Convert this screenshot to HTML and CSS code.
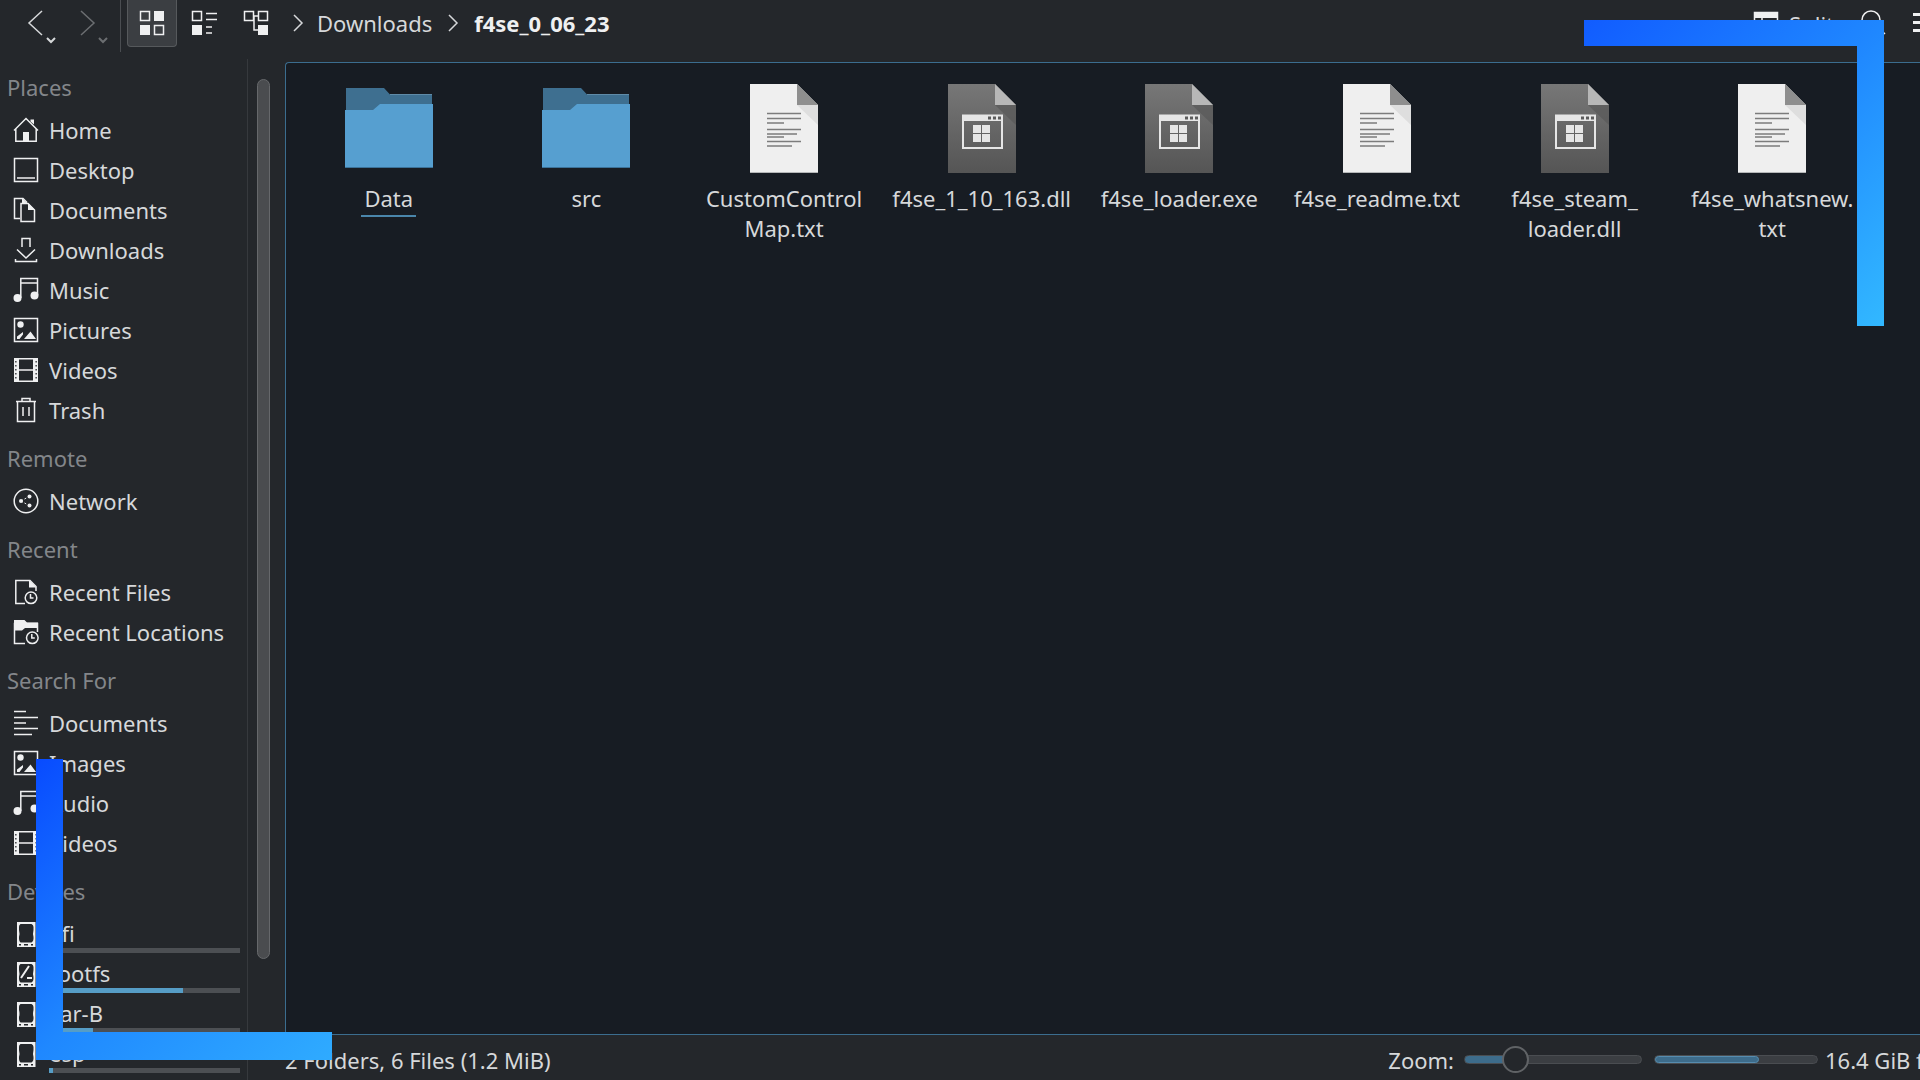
FILE: index.html
```html
<!DOCTYPE html>
<html lang="en">
<head>
    <meta charset="UTF-8">
    <meta name="viewport" content="width=device-width, initial-scale=1.0">
    <title>f4se_0_06_23 - Dolphin</title>
    <link rel="stylesheet" href="styles.css">
</head>
<body>

    <!-- Shared icons -->
    <svg class="sprite" aria-hidden="true">
        <linearGradient id="dark-page" x1="0" y1="0" x2="0" y2="1">
            <stop offset="0" stop-color="#777"/>
            <stop offset="1" stop-color="#555"/>
        </linearGradient>
        <symbol id="folder" viewBox="0 0 96 96">
            <path fill="#3e6f90" d="M5 8h38l6 6.500h42V50H5z"/>
            <path fill="#5f8ba8" d="M49 14h42v1H49z"/>
            <path fill="#569fd0" d="M4 30h28l7-6h53v64H4z"/>
            <path fill="#3b7299" d="M4 87h88v1H4z"/>
        </symbol>
        <symbol id="text-file" viewBox="0 0 96 96">
            <path fill="#efefef" d="M14 4h47l21 21v68H14z"/>
            <path fill="#dedede" d="M61 25h21v20z"/>
            <path fill="#8e8e8e" d="M61 4l21 21H61z"/>
            <path fill="#b5b7b8" d="M14 92h68v1H14z"/>
            <path stroke="#7c7c7c" stroke-width="1.600" d="M31 33.500h34M31 38.500h34M31 43h17M31 49.500h34M31 54h30M31 57h17M31 61.500h34M31 66h25"/>
        </symbol>
        <symbol id="exe-file" viewBox="0 0 96 96">
            <path fill="url(#dark-page)" d="M14 4h47l21 21v68H14z"/>
            <path fill="#555" d="M61 25h21v20z" opacity=".6"/>
            <path fill="#b7b7b7" d="M61 4l21 21H61z"/>
            <path fill="#e6e6e6" fill-rule="evenodd" d="M28 34.500h41V69H28zM30 41v26h37V41z"/>
            <path fill="#5c5c5c" d="M54 36.500h3v3h-3zM59 36.500h3v3h-3zM64 36.500h3v3h-3z"/>
            <path fill="#e6e6e6" d="M39 45h8v8h-8zM48 45h8v8h-8zM39 54h8v8h-8zM48 54h8v8h-8z"/>
        </symbol>
        <symbol id="home" viewBox="0 0 26 26">
            <path fill="none" stroke="currentColor" stroke-width="1.500" d="M1 13.500L13 1.500l12 12M2.800 12v12.300h20.400V12"/>
            <path fill="currentColor" d="M10 15h6v9h-6zM17.500 2.500h3.500v5l-3.500-3z"/>
        </symbol>
        <symbol id="desktop" viewBox="0 0 26 26">
            <path fill="none" stroke="currentColor" stroke-width="1.500" d="M1.500 1.500h23v23h-23zM4 21h18"/>
        </symbol>
        <symbol id="documents" viewBox="0 0 26 26">
            <path fill="none" stroke="currentColor" stroke-width="1.500" d="M7 21.500H1.500v-20H10l4 4M8 6.500h7l6.500 6.500v11.500H8z"/>
            <path fill="currentColor" d="M9 1l5 5.500H9zM15 6l7 7h-7z"/>
        </symbol>
        <symbol id="downloads" viewBox="0 0 26 26">
            <path fill="none" stroke="currentColor" stroke-width="1.500" d="M9 10V1.500h8V10M4 12.500l9 8.500 9-8.500M2.500 22v2.500h21V22"/>
        </symbol>
        <symbol id="music" viewBox="0 0 26 26">
            <path fill="none" stroke="currentColor" stroke-width="1.500" d="M7.800 21V1.500h16.700V18M8 6h16"/>
            <circle cx="4.500" cy="21" r="4" fill="currentColor"/>
            <circle cx="21.500" cy="18.500" r="4" fill="currentColor"/>
        </symbol>
        <symbol id="pictures" viewBox="0 0 26 26">
            <path fill="none" stroke="currentColor" stroke-width="1.500" d="M1.500 1.500h23v23h-23z"/>
            <circle cx="7.500" cy="7.500" r="3.200" fill="currentColor"/>
            <path fill="currentColor" d="M4 22v-2.500l6-4.500v2.500L6.500 22zM11 22l6.500-7.500L23 22z"/>
        </symbol>
        <symbol id="videos" viewBox="0 0 26 26">
            <path fill="none" stroke="currentColor" stroke-width="1.500" d="M1 1.800h24M1 24.200h24M5.500 13h15"/>
            <path fill="currentColor" fill-rule="evenodd" d="M1 1h5v24H1zM2.200 4v1.500h1.300V4zM2.200 8v1.500h1.300V8zM2.200 12v1.500h1.300V12zM2.200 16v1.500h1.300V16zM2.200 20v1.500h1.300V20zM20 1h5v24h-5zM22.500 4v1.500h1.300V4zM22.500 8v1.500h1.300V8zM22.500 12v1.500h1.300V12zM22.500 16v1.500h1.300V16zM22.500 20v1.500h1.300V20z"/>
        </symbol>
        <symbol id="trash" viewBox="0 0 26 26">
            <path fill="none" stroke="currentColor" stroke-width="1.500" d="M3 4.500h20M9 4V1.500h8V4M4.500 4.500v20h17v-20M10 10v9M16 10v9"/>
        </symbol>
        <symbol id="network" viewBox="0 0 26 26">
            <circle cx="13" cy="13" r="11.800" fill="none" stroke="currentColor" stroke-width="1.500"/>
            <path fill="none" stroke="currentColor" stroke-dasharray="2 2" d="M8 13l8-4.500M8 13l8 4.500"/>
            <circle cx="8" cy="13" r="2" fill="currentColor"/>
            <circle cx="16.500" cy="8.500" r="2" fill="currentColor"/>
            <circle cx="16.500" cy="17.500" r="2" fill="currentColor"/>
        </symbol>
        <symbol id="recent-files" viewBox="0 0 26 26">
            <path fill="none" stroke="currentColor" stroke-width="1.500" d="M12 24.500H2.800v-23H17l6 6V12"/>
            <path fill="currentColor" d="M16 1l7.500 7.500H16z"/>
            <path fill="none" stroke="currentColor" stroke-width="1.500" d="M17.500 15v4h3"/>
            <circle cx="18" cy="18.800" r="5.800" fill="none" stroke="currentColor" stroke-width="1.500"/>
        </symbol>
        <symbol id="recent-places" viewBox="0 0 26 26">
            <path fill="none" stroke="currentColor" stroke-width="1.500" d="M12 24.500H1.500v-20h23V13"/>
            <path fill="currentColor" d="M1 1h10.500l2.500 2.500h11V9H12l-3 2.500H1z"/>
            <path fill="none" stroke="currentColor" stroke-width="1.500" d="M18.800 15v4h3"/>
            <circle cx="19.300" cy="18.800" r="5.800" fill="none" stroke="currentColor" stroke-width="1.500"/>
        </symbol>
        <symbol id="lines" viewBox="0 0 26 26">
            <path stroke="currentColor" stroke-width="1.500" d="M1 1.500h12M1 7.500h24M1 13h12M1 18.500h24M1 24.500h18"/>
        </symbol>
        <symbol id="disk" viewBox="0 0 26 26">
            <path fill="currentColor" fill-rule="evenodd" d="M4 1h18.500v25H4zM7.500 3Q6 4 6 6v3q1 4 0 7v2q0 2 1.500 3.500h11Q20.500 20 20.500 18v-2q-1-3 0-7V6q0-2-2-3zM6 23v1.500h2V23zM11 23v1.500h4V23zM18 23v1.500h2V23z"/>
        </symbol>
        <symbol id="root-disk" viewBox="0 0 26 26">
            <use href="#disk"/>
            <path fill="none" stroke="currentColor" stroke-width="2" d="M16 5L8 17M14 17h5"/>
        </symbol>
    </svg>

    <div class="window">
        <header class="toolbar">
            <button class="nav" aria-label="Back">
                <svg width="32" height="46" viewBox="0 0 32 46"><path d="M18 11L5 23l13 12"/><path class="caret" d="M23 38l4 4 4-4"/></svg>
            </button>
            <button class="nav disabled" aria-label="Forward">
                <svg width="32" height="46" viewBox="0 0 32 46"><path d="M4 11l13 12L4 35"/><path class="caret" d="M22 38l4 4 4-4"/></svg>
            </button>
            <span class="separator"></span>
            <button class="tool active" aria-label="Icons view">
                <svg width="26" height="26" viewBox="0 0 26 26"><path class="line" d="M1.500 1.500h9v9h-9zM15.500 15.500h9v9h-9z"/><path class="solid" d="M15 1h10v10H15zM1 15h10v10H1z"/></svg>
            </button>
            <button class="tool" aria-label="Compact view">
                <svg width="26" height="26" viewBox="0 0 26 26"><path class="line" d="M1.500 1.500h9v9h-9zM15 3.500h11M15 9.500h11M15 17h6M15 23h6"/><path class="solid" d="M1 15h10v10H1z"/></svg>
            </button>
            <button class="tool" aria-label="Details view">
                <svg width="26" height="26" viewBox="0 0 26 26"><path class="line" d="M1.500 1.500h9v9h-9zM15.500 1.500h9v9h-9zM11 6h4M11 6v14h4"/><path class="solid" d="M15 15h10v10H15z"/></svg>
            </button>
            <nav class="breadcrumb">
                <svg width="12" height="18" viewBox="0 0 12 18"><path d="M2 1l8 8-8 8"/></svg>
                <a href="#">Downloads</a>
                <svg width="12" height="18" viewBox="0 0 12 18"><path d="M2 1l8 8-8 8"/></svg>
                <a href="#" class="current">f4se_0_06_23</a>
            </nav>
            <div class="tools-right">
                <button class="split">
                    <svg width="26" height="26" viewBox="0 0 26 26"><path class="line" d="M1.500 1.500h23v23h-23zM9 7v17"/><path class="solid" d="M1 1h24v6H1z"/></svg>
                    Split
                </button>
                <button class="tool" aria-label="Search">
                    <svg width="26" height="26" viewBox="0 0 26 26"><circle class="line" cx="11" cy="10" r="9"/><path class="line" d="M18 17l7 7"/></svg>
                </button>
                <button class="tool" aria-label="Menu">
                    <svg width="26" height="26" viewBox="0 0 26 26"><path class="solid" d="M1 3h24v3H1zM1 11h24v3H1zM1 19h24v3H1z"/></svg>
                </button>
            </div>
        </header>

        <aside class="sidebar">
            <div class="places">
                <h2>Places</h2>
                <a href="#"><svg><use href="#home"/></svg>Home</a>
                <a href="#"><svg><use href="#desktop"/></svg>Desktop</a>
                <a href="#"><svg><use href="#documents"/></svg>Documents</a>
                <a href="#"><svg><use href="#downloads"/></svg>Downloads</a>
                <a href="#"><svg><use href="#music"/></svg>Music</a>
                <a href="#"><svg><use href="#pictures"/></svg>Pictures</a>
                <a href="#"><svg><use href="#videos"/></svg>Videos</a>
                <a href="#"><svg><use href="#trash"/></svg>Trash</a>

                <h2>Remote</h2>
                <a href="#"><svg><use href="#network"/></svg>Network</a>

                <h2>Recent</h2>
                <a href="#"><svg><use href="#recent-files"/></svg>Recent Files</a>
                <a href="#"><svg><use href="#recent-places"/></svg>Recent Locations</a>

                <h2>Search For</h2>
                <a href="#"><svg><use href="#lines"/></svg>Documents</a>
                <a href="#"><svg><use href="#pictures"/></svg>Images</a>
                <a href="#"><svg><use href="#music"/></svg>Audio</a>
                <a href="#"><svg><use href="#videos"/></svg>Videos</a>

                <h2>Devices</h2>
                <a href="#"><svg><use href="#disk"/></svg><span class="device">efi<progress value="0" max="100"></progress></span></a>
                <a href="#"><svg><use href="#root-disk"/></svg><span class="device">rootfs<progress value="70" max="100"></progress></span></a>
                <a href="#"><svg><use href="#disk"/></svg><span class="device">var-B<progress value="23" max="100"></progress></span></a>
                <a href="#"><svg><use href="#disk"/></svg><span class="device">esp<progress value="2" max="100"></progress></span></a>
            </div>
            <div class="scrollbar"></div>
        </aside>

        <main class="content">
            <div class="files">
                <a href="#" class="file selected"><svg><use href="#folder"/></svg><span>Data</span></a>
                <a href="#" class="file"><svg><use href="#folder"/></svg><span>src</span></a>
                <a href="#" class="file"><svg><use href="#text-file"/></svg><span>CustomControl<br>Map.txt</span></a>
                <a href="#" class="file"><svg><use href="#exe-file"/></svg><span>f4se_1_10_163.dll</span></a>
                <a href="#" class="file"><svg><use href="#exe-file"/></svg><span>f4se_loader.exe</span></a>
                <a href="#" class="file"><svg><use href="#text-file"/></svg><span>f4se_readme.txt</span></a>
                <a href="#" class="file"><svg><use href="#exe-file"/></svg><span>f4se_steam_<br>loader.dll</span></a>
                <a href="#" class="file"><svg><use href="#text-file"/></svg><span>f4se_whatsnew.<br>txt</span></a>
            </div>
            <footer class="statusbar">
                <span class="summary">2 Folders, 6 Files (1.2 MiB)</span>
                <label for="zoom">Zoom:</label>
                <input type="range" id="zoom" min="0" max="100" value="25">
                <progress class="space" value="64" max="100" aria-label="Disk usage"></progress>
                <span class="free">16.4 GiB free</span>
            </footer>
        </main>
    </div>

    <!-- Corner brackets over the window -->
    <div class="bracket bracket-top"></div>
    <div class="bracket bracket-bottom"></div>

</body>
</html>
```

FILE: styles.css
```css
* {
    box-sizing: border-box;
}

body {
    margin: 0;
    background-color: #24272b;
    color: #d6d8da;
    font-family: "Noto Sans", sans-serif;
    font-size: 22px;
    line-height: 30px;
    overflow: hidden;
}

a {
    color: inherit;
    text-decoration: none;
}

button {
    padding: 0;
    border: none;
    background: none;
    color: inherit;
    font: inherit;
    flex-shrink: 0;
}

.sprite {
    position: absolute;
    width: 0;
    height: 0;
}

.window {
    display: grid;
    grid-template-columns: 285px 1fr;
    grid-template-rows: 62px 1fr;
    height: 100vh;
}

/* Toolbar */
.toolbar {
    grid-column: 1 / 3;
    display: flex;
    align-items: flex-start;
    padding-left: 24px;
}

.toolbar svg {
    display: block;
    fill: none;
    stroke: #d6d8da;
    stroke-width: 1.5;
}

.toolbar .line {
    stroke: #eff0f1;
}

.toolbar .solid {
    fill: #eff0f1;
    stroke: none;
}

.toolbar .caret {
    stroke-width: 2;
}

.nav {
    width: 53px;
}

.nav.disabled {
    width: 43px;
    opacity: 0.4;
}

.separator {
    width: 1px;
    height: 52px;
    margin-right: 6px;
    background-color: #4a4d51;
}

.tool {
    display: flex;
    justify-content: center;
    width: 50px;
    height: 47px;
    padding-top: 10px;
    margin-right: 2px;
}

.tool.active {
    background-color: #3b3e42;
    border: 1px solid #56595c;
    border-top: none;
    border-radius: 0 0 4px 4px;
}

.breadcrumb {
    display: flex;
    align-items: center;
    gap: 13px;
    height: 46px;
    margin-left: 9px;
}

.breadcrumb .current {
    margin-left: 2px;
}

.breadcrumb a + svg {
    margin-left: 2px;
}

.current {
    font-weight: bold;
    color: #eff0f1;
}

.tools-right {
    display: flex;
    margin-left: auto;
    margin-right: -32px;
}

.split {
    display: flex;
    align-items: center;
    gap: 10px;
    height: 47px;
    margin-right: 14px;
}

/* Places panel */
.sidebar {
    display: flex;
    min-height: 0;
}

.places {
    width: 248px;
    margin-top: -3px;
    overflow: hidden;
    border-right: 1px solid #36393d;
}

.places h2 {
    margin: 0;
    padding: 13px 0 8px 7px;
    font-size: 22px;
    font-weight: normal;
    color: #83868a;
}

.places a {
    display: flex;
    align-items: center;
    gap: 10px;
    height: 40px;
    padding: 0 7px 0 13px;
}

.places svg {
    width: 26px;
    height: 26px;
    flex-shrink: 0;
    color: #eff0f1;
}

.device {
    flex: 1;
    padding-top: 4px;
    height: 40px;
}

.device progress {
    display: block;
    width: 100%;
    height: 5px;
}

progress {
    appearance: none;
    border: none;
}

progress::-webkit-progress-bar {
    background-color: #4c4f53;
}

progress::-webkit-progress-value {
    background-color: #569dc6;
}

.scrollbar {
    width: 13px;
    height: 880px;
    margin: 17px 0 0 9px;
    background-color: #4a4c4f;
    border: 1px solid #66686b;
    border-radius: 7px;
}

/* File view */
.content {
    display: flex;
    flex-direction: column;
    min-width: 0;
}

.files {
    flex: 1;
    display: grid;
    grid-template-columns: repeat(auto-fill, minmax(180px, 1fr));
    align-content: start;
    padding: 17px 49px 0 4px;
    background-color: #171c23;
    border: 1px solid #3b6d8f;
    border-right: none;
    border-radius: 4px 0 0 4px;
}

.file {
    display: flex;
    flex-direction: column;
    align-items: center;
    text-align: center;
    white-space: nowrap;
}

.file svg {
    width: 96px;
    height: 96px;
    margin-bottom: 7px;
}

.selected span {
    padding: 0 3px 2px;
    border-bottom: 2px solid #4a86ab;
}

/* Status bar */
.statusbar {
    display: flex;
    align-items: center;
    height: 45px;
    padding-top: 5px;
    white-space: nowrap;
}

.summary {
    flex: 1;
}

#zoom {
    appearance: none;
    width: 178px;
    height: 28px;
    margin: 0 12px 2px 10px;
    background: none;
}

#zoom::-webkit-slider-runnable-track {
    height: 9px;
    border: 1px solid #4a4d51;
    border-radius: 5px;
    background: linear-gradient(to right, #3d6c8b 28%, #3b3e42 28%);
}

#zoom::-webkit-slider-thumb {
    appearance: none;
    width: 27px;
    height: 27px;
    margin-top: -10px;
    border: 2px solid #606366;
    border-radius: 50%;
    background-color: #24272b;
}

.space {
    width: 164px;
    height: 9px;
    margin: 0 7px 2px 0;
    border-radius: 5px;
    overflow: hidden;
}

.space::-webkit-progress-bar {
    background-color: #3b3e42;
    border: 1px solid #4a4d51;
    border-radius: 5px;
}

.space::-webkit-progress-value {
    background-color: #3d6c8b;
    border: 1px solid #568cae;
    border-radius: 5px;
}

.free {
    width: 95px;
}

/* Corner brackets */
.bracket {
    position: absolute;
    pointer-events: none;
}

.bracket-top {
    top: 20px;
    right: 36px;
    width: 300px;
    height: 306px;
    background: linear-gradient(135deg, #115cff, #1f87ff 50%, #32b8ff);
    clip-path: polygon(0 0, 100% 0, 100% 100%, 273px 100%, 273px 26px, 0 26px);
}

.bracket-bottom {
    left: 36px;
    bottom: 20px;
    width: 296px;
    height: 301px;
    background: linear-gradient(135deg, #084bff, #1f88ff 50%, #2fabff);
    clip-path: polygon(0 0, 27px 0, 27px 273px, 100% 273px, 100% 100%, 0 100%);
}
```
